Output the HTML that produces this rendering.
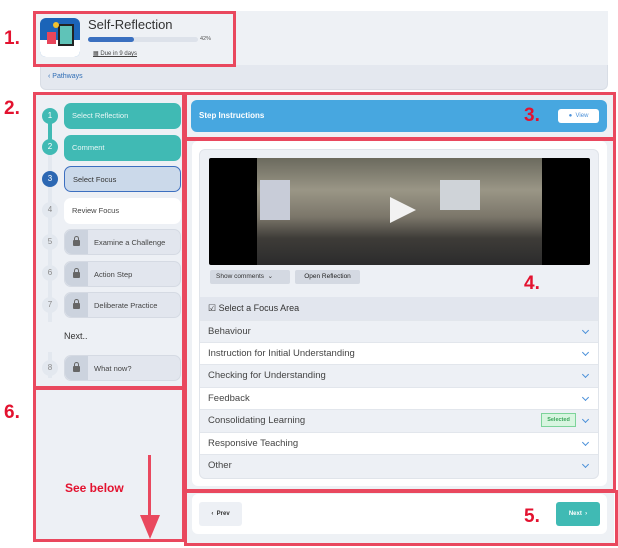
<!DOCTYPE html>
<html><head><style>
*{box-sizing:border-box;margin:0;padding:0}
body{width:618px;height:548px;background:#fff;font-family:"Liberation Sans",sans-serif;position:relative;overflow:hidden;color:#333}
.a{position:absolute}
.red{border:3px solid #e9485e}
.lbl{position:absolute;color:#e3122f;font-weight:bold;font-size:19px}
.circ{position:absolute;left:42px;width:16px;height:16px;border-radius:50%;background:#e3e8ef;color:#888;font-size:8px;text-align:center;line-height:16px}
.pill{position:absolute;left:64px;width:117px;height:26px;border-radius:7px;font-size:7.5px;line-height:26px;padding-left:8px}
.lock{background:#e2e6ee;border:1px solid #d5dae3;color:#444;padding-left:0}
.lock span.l{display:inline-block;width:23px;height:100%;background:#ccd3de;border-radius:7px 0 0 7px;margin-right:6px;vertical-align:top;position:relative}
.lock span.l:after{content:"";position:absolute;left:8px;top:10px;width:7px;height:6px;background:#666;border-radius:1px}
.lock span.l:before{content:"";position:absolute;left:9px;top:6px;width:3px;height:4px;border:1.5px solid #666;border-bottom:none;border-radius:3px 3px 0 0}
.row{position:absolute;left:200px;width:398px;height:22.6px;font-size:9.5px;line-height:22px;padding-left:8px;color:#444;border-top:1px solid #e2e6ec}
.row:after{content:"";position:absolute;right:10px;top:7px;width:4px;height:4px;border-right:1.5px solid #4a90d9;border-bottom:1.5px solid #4a90d9;transform:rotate(45deg)}
</style></head><body>
<div class="a" style="left:35px;top:11px;width:573px;height:54px;background:#eef1f5"></div>
<div class="a" style="left:40px;top:65px;width:568px;height:25px;background:#e4e8ef;border-radius:0 0 6px 6px;border:1px solid #d8dde5;border-top:none"></div>
<div class="a" style="left:48px;top:73px;font-size:7px;color:#2f6db5">&#8249; Pathways</div>
<div class="a" style="left:40px;top:18px;width:40px;height:39px;border-radius:6px;background:#1b64b8;overflow:hidden">
 <div class="a" style="left:0;top:22px;width:40px;height:17px;background:#fff"></div>
 <div class="a" style="left:18px;top:6px;width:16px;height:22px;background:#5fc3b8;border:2px solid #222"></div>
 <div class="a" style="left:7px;top:14px;width:9px;height:12px;background:#e8455a"></div>
 <div class="a" style="left:13px;top:4px;width:6px;height:6px;border-radius:50%;background:#f2c12e"></div>
</div>
<div class="a" style="left:88px;top:17px;font-size:13px;color:#333">Self-Reflection</div>
<div class="a" style="left:88px;top:37px;width:110px;height:5px;border-radius:3px;background:#dde2ea"><div style="width:46px;height:5px;border-radius:3px;background:#3a70c0"></div></div>
<div class="a" style="left:200px;top:36px;font-size:5.5px;color:#555">42%</div>
<div class="a" style="left:93px;top:50px;font-size:6px;color:#444;text-decoration:underline">&#9638; Due in 9 days</div>
<div class="a red" style="left:33px;top:11px;width:203px;height:56px"></div>

<!-- sidebar -->
<div class="a" style="left:35px;top:94px;width:148px;height:446px;background:#edf0f5"></div>
<div class="a" style="left:48px;top:116px;width:4px;height:262px;background:#e3e8ef"></div>
<div class="a" style="left:48px;top:116px;width:4px;height:32px;background:#40bab4"></div>
<div class="circ" style="top:108px;background:#40bab4;color:#fff">1</div>
<div class="circ" style="top:139px;background:#40bab4;color:#fff">2</div>
<div class="circ" style="top:171px;background:#2d68b3;color:#fff">3</div>
<div class="circ" style="top:202px">4</div>
<div class="circ" style="top:234px">5</div>
<div class="circ" style="top:265px">6</div>
<div class="circ" style="top:297px">7</div>
<div class="a" style="left:46px;top:322px;width:10px;height:30px;background:#edf0f5"></div>
<div class="circ" style="top:360px">8</div>
<div class="pill" style="top:103px;background:#40bab4;color:#e8f7f6">Select Reflection</div>
<div class="pill" style="top:135px;background:#40bab4;color:#e8f7f6">Comment</div>
<div class="pill" style="top:166px;background:#cbd9ea;border:1.5px solid #3c6fc0;color:#333">Select Focus</div>
<div class="pill" style="top:198px;background:#fff;color:#444">Review Focus</div>
<div class="pill lock" style="top:229px"><span class="l"></span>Examine a Challenge</div>
<div class="pill lock" style="top:261px"><span class="l"></span>Action Step</div>
<div class="pill lock" style="top:292px"><span class="l"></span>Deliberate Practice</div>
<div class="a" style="left:64px;top:331px;font-size:9px;color:#333">Next..</div>
<div class="pill lock" style="top:355px"><span class="l"></span>What now?</div>
<div class="a red" style="left:33px;top:92px;width:152px;height:297px"></div>
<div class="a red" style="left:33px;top:387px;width:152px;height:155px"></div>
<div class="a" style="left:65px;top:481px;font-size:12px;font-weight:bold;color:#e3122f">See below</div>
<div class="a" style="left:148px;top:455px;width:3px;height:70px;background:#e9485e"></div>
<div class="a" style="left:140px;top:515px;width:0;height:0;border-left:10px solid transparent;border-right:10px solid transparent;border-top:24px solid #e9485e"></div>

<!-- main -->
<div class="a" style="left:186px;top:94px;width:428px;height:450px;background:#eef1f5"></div>
<div class="a" style="left:191px;top:100px;width:416px;height:32px;background:#47a7e0;border-radius:6px"></div>
<div class="a" style="left:199px;top:111px;font-size:8px;font-weight:bold;color:#fff">Step Instructions</div>
<div class="a" style="left:558px;top:109px;width:41px;height:14px;background:#fff;border-radius:3px;font-size:6px;color:#4a90d9;line-height:14px;text-align:center">&#9679;&nbsp; View</div>
<div class="a red" style="left:184px;top:92px;width:432px;height:48px"></div>

<div class="a" style="left:192px;top:141px;width:415px;height:345px;background:#fff;border-radius:6px"></div>
<div class="a" style="left:199px;top:149px;width:400px;height:330px;background:#edf0f5;border-radius:6px;border:1px solid #e0e4ea"></div>
<div class="a" style="left:209px;top:158px;width:381px;height:107px;background:#000;border-radius:2px"></div>
<div class="a" style="left:257px;top:158px;width:285px;height:107px;background:linear-gradient(180deg,#6b6a5e 0%,#9a9686 30%,#7b766a 55%,#3e3c38 75%,#2b2b2c 100%)"></div>
<div class="a" style="left:260px;top:180px;width:30px;height:40px;background:#c8ccd8"></div>
<div class="a" style="left:440px;top:180px;width:40px;height:30px;background:#cfd3d8"></div>
<div class="a" style="left:390px;top:197px;width:0;height:0;border-top:13px solid transparent;border-bottom:13px solid transparent;border-left:26px solid #f2f2f2"></div>
<div class="a" style="left:210px;top:270px;width:80px;height:14px;background:#d4d9e2;border-radius:2px;font-size:6.5px;line-height:14px;padding-left:6px;color:#333">Show comments &nbsp;&#8964;</div>
<div class="a" style="left:295px;top:270px;width:65px;height:14px;background:#d4d9e2;border-radius:2px;font-size:6.5px;line-height:14px;text-align:center;color:#222">Open Reflection</div>
<div class="a" style="left:200px;top:297px;width:398px;height:23px;background:#e2e6ee;font-size:9px;line-height:22px;padding-left:8px;color:#333">&#9745; Select a Focus Area</div>
<div class="row" style="top:320px;background:#edf0f5">Behaviour</div>
<div class="row" style="top:342px;background:#fff">Instruction for Initial Understanding</div>
<div class="row" style="top:364px;background:#edf0f5">Checking for Understanding</div>
<div class="row" style="top:387px;background:#fff">Feedback</div>
<div class="row" style="top:409px;background:#edf0f5">Consolidating Learning</div>
<div class="a" style="left:541px;top:413px;width:35px;height:14px;background:#d8f5e0;border:1px solid #7dd39a;font-size:5.5px;color:#3aa55a;line-height:12px;text-align:center;font-weight:bold">Selected</div>
<div class="row" style="top:432px;background:#fff">Responsive Teaching</div>
<div class="row" style="top:454px;background:#edf0f5;border-radius:0 0 6px 6px">Other</div>
<div class="a red" style="left:184px;top:138px;width:432px;height:354px"></div>

<div class="a" style="left:192px;top:494px;width:415px;height:40px;background:#fff;border-radius:6px"></div>
<div class="a" style="left:199px;top:502px;width:43px;height:24px;background:#edf0f5;border-radius:3px;font-size:6px;font-weight:bold;line-height:24px;text-align:center;color:#333">&#8249;&nbsp; Prev</div>
<div class="a" style="left:556px;top:502px;width:44px;height:24px;background:#40bab4;border-radius:3px;font-size:6px;font-weight:bold;line-height:24px;text-align:center;color:#fff">Next &nbsp;&#8250;</div>
<div class="a red" style="left:184px;top:490px;width:434px;height:56px"></div>

<div class="lbl" style="left:4px;top:28px">1.</div>
<div class="lbl" style="left:4px;top:98px">2.</div>
<div class="lbl" style="left:4px;top:402px">6.</div>
<div class="lbl" style="left:524px;top:105px">3.</div>
<div class="lbl" style="left:524px;top:273px">4.</div>
<div class="lbl" style="left:524px;top:506px">5.</div>
</body></html>
